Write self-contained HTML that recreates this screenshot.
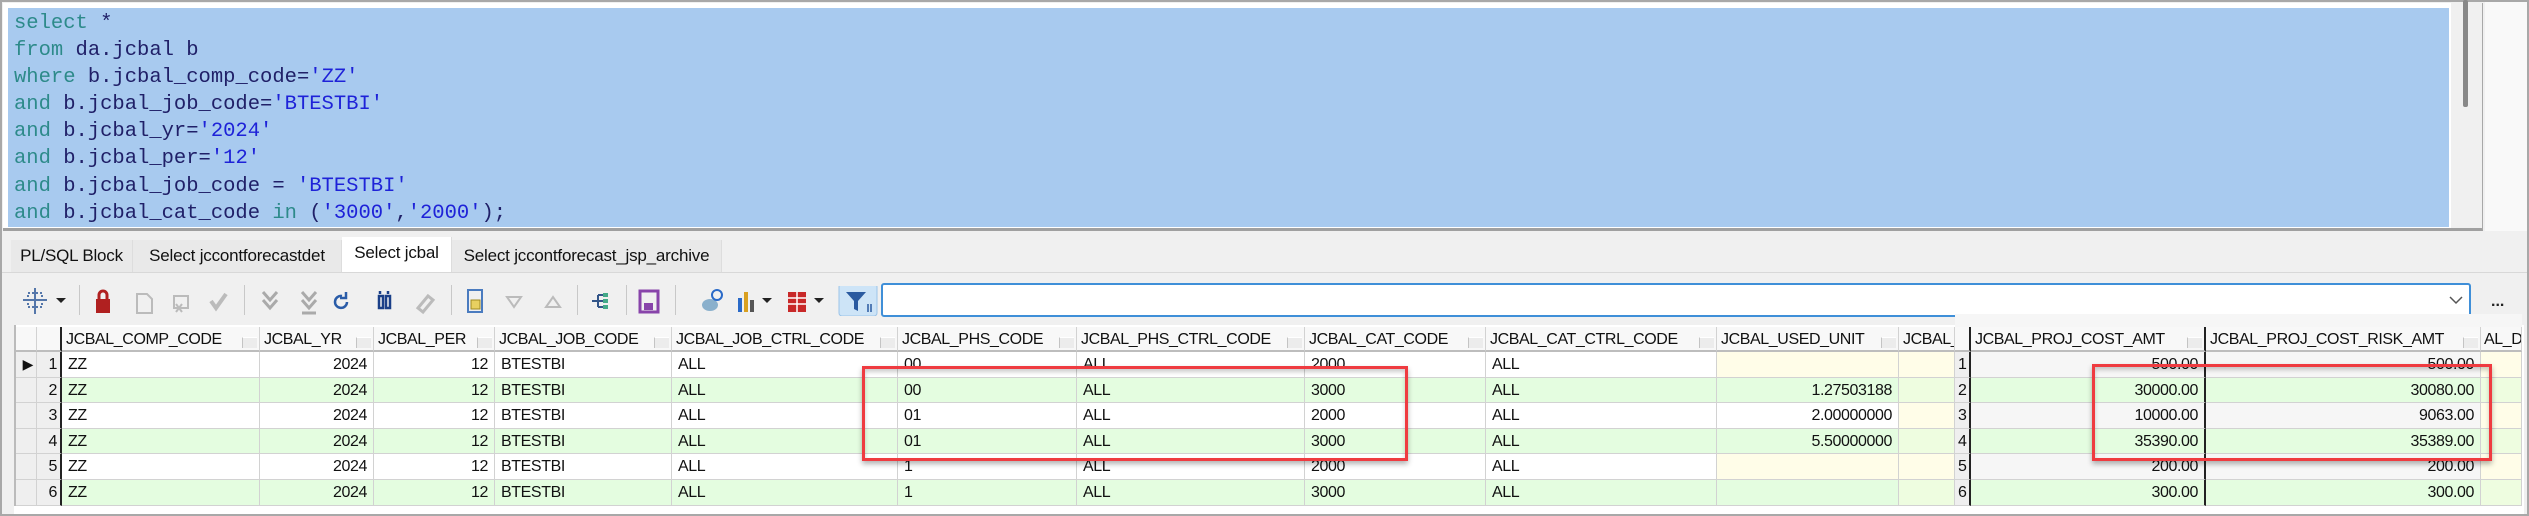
<!DOCTYPE html>
<html><head><meta charset="utf-8"><style>
*{box-sizing:border-box;margin:0;padding:0}
body{width:2529px;height:516px;overflow:hidden;background:#f0f0f0;position:relative;font-family:"Liberation Sans",sans-serif}
.abs{position:absolute}
#frame{left:0;top:0;width:2529px;height:516px;border:2px solid #a8a8a8}
#ed{left:3px;top:3px;width:2480px;height:228px;background:#fff;border-bottom:3px solid #a0a0a0;border-right:2px solid #a8a8a8}
#sel{left:8px;top:8px;width:2441px;height:219px;background:#a8caef}
#code{left:14px;top:10px;font-family:"Liberation Mono",monospace;font-size:20.5px;line-height:27.1px;color:#202068;white-space:pre}
.k{color:#2d8a8a}.s{color:#1e22d8}
#sb{left:2451px;top:3px;width:31px;height:225px;background:#f0f0f0}
#thumb{left:2463px;top:0;width:5px;height:107px;background:#888;border-radius:2px}
#rp{left:2485px;top:2px;width:42px;height:229px;background:#f9f9f9}
.tab{position:absolute;top:240px;height:32px;font-size:17px;line-height:32px;color:#111;text-align:center;background:#e9e9e9;border-right:1px solid #ddd;letter-spacing:-0.2px}
#tb{left:2px;top:276px;width:2525px;height:45px;background:#f0f0f0}
.sep{position:absolute;top:285px;width:1px;height:30px;background:#c8c8c8}
#inp{left:881px;top:283px;width:1590px;height:34px;background:#fff;border:2px solid #3f8fd8;border-radius:3px}
#grid{left:14px;top:325px;width:2510px;height:190px;background:#fff}
.row{position:absolute;left:16px;display:flex;height:25.6px}
.c{position:relative;height:100%;border-right:1px solid #d2d2d2;border-bottom:1px solid #d2d2d2;font-size:16px;letter-spacing:-0.4px;line-height:25px;padding:0 6px;white-space:nowrap;overflow:hidden;color:#111}
.r{text-align:right}
.h .c{background:#f8f8f8;border-bottom:2px solid #bdbdbd;padding-left:4px}
.h .c.b::after{content:"";position:absolute;right:2px;bottom:2px;width:14px;height:10px;background:#ececec;border-top:1px solid #fff;border-left:1px solid #c4c4c4}
.rn{background:#efefef;text-align:right;padding:0 3px}
.g{background:#e4fde0}
.y{background:#fffde8}
.dk{border-right:2px solid #222}
.red{position:absolute;border:3px solid #ef3b40;box-shadow:0 3px 5px rgba(0,0,0,.3), inset 0 3px 4px rgba(0,0,0,.2)}
</style></head><body>
<div id="frame" class="abs"></div>
<div id="ed" class="abs"></div>
<div id="sel" class="abs"></div>
<div id="code" class="abs"><span class="k">select</span> *
<span class="k">from</span> da.jcbal b
<span class="k">where</span> b.jcbal_comp_code=<span class="s">'ZZ'</span>
<span class="k">and</span> b.jcbal_job_code=<span class="s">'BTESTBI'</span>
<span class="k">and</span> b.jcbal_yr=<span class="s">'2024'</span>
<span class="k">and</span> b.jcbal_per=<span class="s">'12'</span>
<span class="k">and</span> b.jcbal_job_code = <span class="s">'BTESTBI'</span>
<span class="k">and</span> b.jcbal_cat_code <span class="k">in</span> (<span class="s">'3000'</span>,<span class="s">'2000'</span>);</div>
<div id="sb" class="abs"></div>
<div id="thumb" class="abs"></div>
<div id="rp" class="abs"></div>

<div class="tab" style="left:11px;width:122px">PL/SQL Block</div>
<div class="tab" style="left:133px;width:209px">Select jccontforecastdet</div>
<div class="tab" style="left:342px;width:110px;top:237px;height:36px;background:#fff">Select jcbal</div>
<div class="tab" style="left:452px;width:270px">Select jccontforecast_jsp_archive</div>
<div class="abs" style="left:2px;top:272px;width:2525px;height:1px;background:#d8d8d8"></div>

<div id="tb" class="abs"></div>
<svg class="abs" style="left:20px;top:286px" width="870" height="30" viewBox="0 0 870 30">
 <g fill="none" stroke-width="2">
  <rect x="8" y="7" width="14" height="14" stroke="#5577aa" stroke-dasharray="2 2"/><path d="M15 2v26M3 14h24" stroke="#5577aa"/>
  <path d="M36 12l5 5 5-5z" fill="#222" stroke="none"/>
  <rect x="76" y="13" width="14" height="14" fill="#b02020" stroke="none"/><path d="M79 13v-4a4 4 0 0 1 8 0v4" stroke="#b02020" stroke-width="3"/>
  <path d="M117 8h10l5 5v14h-15z" stroke="#bbb"/>
  <path d="M154 10h14v12h-14zM156 18l6 8M162 18l-6 8" stroke="#bbb"/>
  <path d="M191 15l5 7 10-14" stroke="#bbb" stroke-width="4"/>
  <path d="M243 6l7 8 7-8M243 14l7 8 7-8" stroke="#aaa" stroke-width="3"/>
  <path d="M282 6l7 8 7-8M282 14l7 8 7-8M282 27h14" stroke="#aaa" stroke-width="3"/>
  <path d="M322 10a6 6 0 1 0 5 6M326 6v6h-6" stroke="#2a5ca8" stroke-width="2.5"/>
  <path d="M359 10h4v12h-4zM366 10h4v12h-4zM360 8v-3M368 8v-3" stroke="#1a3f88" stroke-width="2.5"/>
  <path d="M398 22l10-12 5 4-10 12z" stroke="#bbb" stroke-width="3"/>
  <rect x="448" y="4" width="14" height="22" stroke="#4a7bbf"/><rect x="451" y="14" width="9" height="9" fill="#e8d060" stroke="#a08a20" stroke-width="1"/>
  <path d="M487 11h14l-7 10z" stroke="#bbb"/><path d="M526 21h14l-7-10z" stroke="#bbb"/>
  <path d="M572 15h6M578 9v12M578 9h5M578 15h5M578 21h5" stroke="#335588"/><rect x="583" y="7" width="5" height="4" fill="#4a8"/><rect x="583" y="13" width="5" height="4" fill="#4a8"/><rect x="583" y="19" width="5" height="4" fill="#4a8"/>
  <rect x="620" y="5" width="18" height="21" stroke="#8844aa" stroke-width="3"/><rect x="624" y="17" width="9" height="7" fill="#8844aa" stroke="none"/>
  <ellipse cx="690" cy="19" rx="8" ry="6" fill="#8ab0cc" stroke="none"/><circle cx="697" cy="9" r="5" stroke="#2a6ac8"/>
  <rect x="718" y="12" width="4" height="14" fill="#2a6ac8" stroke="none"/><rect x="724" y="6" width="4" height="20" fill="#d9a020" stroke="none"/><rect x="730" y="14" width="4" height="12" fill="#555" stroke="none"/>
  <path d="M742 12l5 5 5-5z" fill="#222" stroke="none"/>
  <rect x="768" y="6" width="18" height="20" fill="#c82828" stroke="none"/><path d="M768 12h18M768 18h18M777 6v20" stroke="#fff" stroke-width="1.5"/>
  <path d="M794 12l5 5 5-5z" fill="#222" stroke="none"/>
 </g>
 <rect x="819" y="-2" width="38" height="32" rx="3" fill="#cde4f7" stroke="#9cc4e8"/>
 <path d="M826 6h20l-8 9v10l-4-2v-8z" fill="#2a5aa0"/><path d="M848 18v8M851 18v8" stroke="#2a5aa0" stroke-width="1.5"/>
</svg>
<div class="sep" style="left:79px"></div><div class="sep" style="left:244px"></div><div class="sep" style="left:451px"></div><div class="sep" style="left:577px"></div><div class="sep" style="left:626px"></div><div class="sep" style="left:675px"></div>
<div id="inp" class="abs"></div>
<svg class="abs" style="left:2448px;top:293px" width="16" height="14"><path d="M2 4l6 6 6-6" fill="none" stroke="#555" stroke-width="1.5"/></svg>
<div class="abs" style="left:2491px;top:293px;font-size:16px;font-weight:bold;color:#222">...</div>

<div id="grid" class="abs"></div>
<div class="abs" style="left:14px;top:325px;width:2px;height:181px;background:#bbb"></div>

<div class="row h" style="top:327px;height:25px">
<div class="c rn" style="width:21px"></div><div class="c rn dk" style="width:25px"></div>
<div class="c b" style="width:198px">JCBAL_COMP_CODE</div><div class="c b" style="width:114px">JCBAL_YR</div><div class="c b" style="width:121px">JCBAL_PER</div><div class="c b" style="width:177px">JCBAL_JOB_CODE</div><div class="c b" style="width:226px">JCBAL_JOB_CTRL_CODE</div><div class="c b" style="width:179px">JCBAL_PHS_CODE</div><div class="c b" style="width:228px">JCBAL_PHS_CTRL_CODE</div><div class="c b" style="width:181px">JCBAL_CAT_CODE</div><div class="c b" style="width:231px">JCBAL_CAT_CTRL_CODE</div><div class="c b" style="width:182px">JCBAL_USED_UNIT</div><div class="c" style="width:56px">JCBAL_</div>
</div>

<div class="row" style="top:352px"><div class="c rn" style="width:21px;font-size:14px">&#9654;</div><div class="c rn dk" style="width:25px">1</div><div class="c" style="width:198px">ZZ</div><div class="c r" style="width:114px">2024</div><div class="c r" style="width:121px">12</div><div class="c" style="width:177px">BTESTBI</div><div class="c" style="width:226px">ALL</div><div class="c" style="width:179px">00</div><div class="c" style="width:228px">ALL</div><div class="c" style="width:181px">2000</div><div class="c" style="width:231px">ALL</div><div class="c r y" style="width:182px"></div><div class="c y" style="width:56px"></div></div>
<div class="row g" style="top:377.6px"><div class="c rn" style="width:21px"></div><div class="c rn dk" style="width:25px">2</div><div class="c" style="width:198px">ZZ</div><div class="c r" style="width:114px">2024</div><div class="c r" style="width:121px">12</div><div class="c" style="width:177px">BTESTBI</div><div class="c" style="width:226px">ALL</div><div class="c" style="width:179px">00</div><div class="c" style="width:228px">ALL</div><div class="c" style="width:181px">3000</div><div class="c" style="width:231px">ALL</div><div class="c r" style="width:182px">1.27503188</div><div class="c" style="width:56px;background:#eefde0"></div></div>
<div class="row" style="top:403.2px"><div class="c rn" style="width:21px"></div><div class="c rn dk" style="width:25px">3</div><div class="c" style="width:198px">ZZ</div><div class="c r" style="width:114px">2024</div><div class="c r" style="width:121px">12</div><div class="c" style="width:177px">BTESTBI</div><div class="c" style="width:226px">ALL</div><div class="c" style="width:179px">01</div><div class="c" style="width:228px">ALL</div><div class="c" style="width:181px">2000</div><div class="c" style="width:231px">ALL</div><div class="c r" style="width:182px">2.00000000</div><div class="c y" style="width:56px"></div></div>
<div class="row g" style="top:428.8px"><div class="c rn" style="width:21px"></div><div class="c rn dk" style="width:25px">4</div><div class="c" style="width:198px">ZZ</div><div class="c r" style="width:114px">2024</div><div class="c r" style="width:121px">12</div><div class="c" style="width:177px">BTESTBI</div><div class="c" style="width:226px">ALL</div><div class="c" style="width:179px">01</div><div class="c" style="width:228px">ALL</div><div class="c" style="width:181px">3000</div><div class="c" style="width:231px">ALL</div><div class="c r" style="width:182px">5.50000000</div><div class="c" style="width:56px;background:#eefde0"></div></div>
<div class="row" style="top:454.4px"><div class="c rn" style="width:21px"></div><div class="c rn dk" style="width:25px">5</div><div class="c" style="width:198px">ZZ</div><div class="c r" style="width:114px">2024</div><div class="c r" style="width:121px">12</div><div class="c" style="width:177px">BTESTBI</div><div class="c" style="width:226px">ALL</div><div class="c" style="width:179px">1</div><div class="c" style="width:228px">ALL</div><div class="c" style="width:181px">2000</div><div class="c" style="width:231px">ALL</div><div class="c r y" style="width:182px"></div><div class="c y" style="width:56px"></div></div>
<div class="row g" style="top:480px"><div class="c rn" style="width:21px"></div><div class="c rn dk" style="width:25px">6</div><div class="c" style="width:198px">ZZ</div><div class="c r" style="width:114px">2024</div><div class="c r" style="width:121px">12</div><div class="c" style="width:177px">BTESTBI</div><div class="c" style="width:226px">ALL</div><div class="c" style="width:179px">1</div><div class="c" style="width:228px">ALL</div><div class="c" style="width:181px">3000</div><div class="c" style="width:231px">ALL</div><div class="c r" style="width:182px"></div><div class="c" style="width:56px;background:#eefde0"></div></div>

<div class="abs" style="left:1955px;top:314px;width:567px;height:192px;background:#f6f6f6"></div>
<div class="row h" style="top:327px;left:1955px;height:25px"><div class="c rn" style="width:16px;border-right:2px solid #222"></div><div class="c b" style="width:235px;border-right:2px solid #222">JCBAL_PROJ_COST_AMT</div><div class="c b" style="width:275px">JCBAL_PROJ_COST_RISK_AMT</div><div class="c" style="width:41px;padding-left:3px">AL_D</div></div>
<div class="row" style="top:352px;left:1955px"><div class="c rn" style="width:16px;border-right:2px solid #222">1</div><div class="c r" style="width:235px;border-right:2px solid #222">500.00</div><div class="c r" style="width:275px">500.00</div><div class="c y" style="width:41px"></div></div>
<div class="row g" style="top:377.6px;left:1955px"><div class="c rn" style="width:16px;border-right:2px solid #222">2</div><div class="c r" style="width:235px;border-right:2px solid #222">30000.00</div><div class="c r" style="width:275px">30080.00</div><div class="c" style="width:41px;background:#eefde0"></div></div>
<div class="row" style="top:403.2px;left:1955px"><div class="c rn" style="width:16px;border-right:2px solid #222">3</div><div class="c r" style="width:235px;border-right:2px solid #222">10000.00</div><div class="c r" style="width:275px">9063.00</div><div class="c y" style="width:41px"></div></div>
<div class="row g" style="top:428.8px;left:1955px"><div class="c rn" style="width:16px;border-right:2px solid #222">4</div><div class="c r" style="width:235px;border-right:2px solid #222">35390.00</div><div class="c r" style="width:275px">35389.00</div><div class="c" style="width:41px;background:#eefde0"></div></div>
<div class="row" style="top:454.4px;left:1955px"><div class="c rn" style="width:16px;border-right:2px solid #222">5</div><div class="c r" style="width:235px;border-right:2px solid #222">200.00</div><div class="c r" style="width:275px">200.00</div><div class="c y" style="width:41px"></div></div>
<div class="row g" style="top:480px;left:1955px"><div class="c rn" style="width:16px;border-right:2px solid #222">6</div><div class="c r" style="width:235px;border-right:2px solid #222">300.00</div><div class="c r" style="width:275px">300.00</div><div class="c" style="width:41px;background:#eefde0"></div></div>

<div class="red" style="left:862px;top:366px;width:546px;height:95px"></div>
<div class="red" style="left:2092px;top:364px;width:400px;height:97px"></div>
<div class="abs" style="left:0;top:514px;width:2529px;height:2px;background:#a8a8a8"></div>
</body></html>
